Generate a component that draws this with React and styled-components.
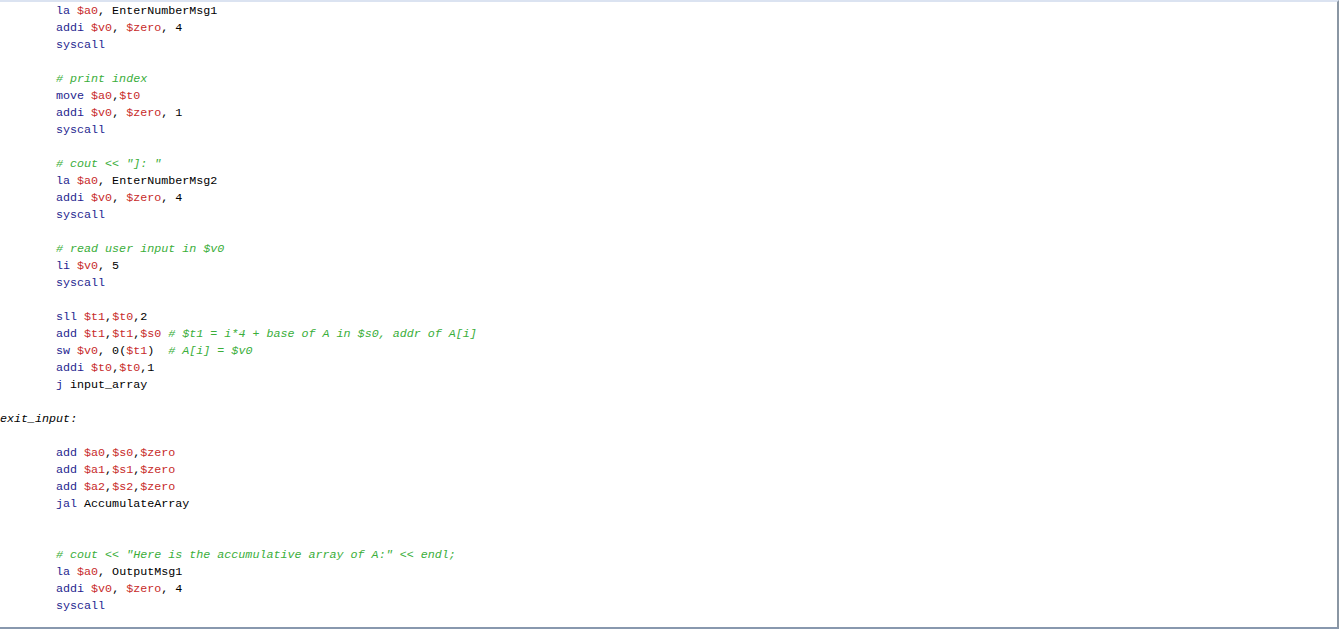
import React from 'react';
import styled, {createGlobalStyle} from "styled-components";

const Global = createGlobalStyle`
    html, body {
        margin: 0;
        padding: 0;
        background: #ffffff;
    }
`;

const Editor = styled.div`
    box-sizing: border-box;
    width: 1339px;
    height: 629px;
    overflow: hidden;
    padding-top: 1px;
    background: #ffffff;
    border-top: 2px solid #dbe3f1;
    border-right: 2px solid #8a96a3;
    border-bottom: 2px solid #8898ae;
    font-family: "Liberation Mono", "Courier New", monospace;
    font-size: 11.7px;
    color: #000000;
`;

const Line = styled.div`
    height: 17px;
    line-height: 17px;
    white-space: pre;
    padding-left: ${props => props.$indent ? '56px' : '0'};
`;

const Op = styled.span`
    color: #1f1f8f;
`;

const Reg = styled.span`
    color: #c72a2a;
`;

const Comment = styled.span`
    color: #3aae3a;
    font-style: italic;
`;

const Label = styled.span`
    font-style: italic;
`;

const code = [
    'la $a0, EnterNumberMsg1',
    'addi $v0, $zero, 4',
    'syscall',
    '',
    '# print index',
    'move $a0,$t0',
    'addi $v0, $zero, 1',
    'syscall',
    '',
    '# cout << "]: "',
    'la $a0, EnterNumberMsg2',
    'addi $v0, $zero, 4',
    'syscall',
    '',
    '# read user input in $v0',
    'li $v0, 5',
    'syscall',
    '',
    'sll $t1,$t0,2',
    'add $t1,$t1,$s0 # $t1 = i*4 + base of A in $s0, addr of A[i]',
    'sw $v0, 0($t1)  # A[i] = $v0',
    'addi $t0,$t0,1',
    'j input_array',
    '',
    'exit_input:',
    '',
    'add $a0,$s0,$zero',
    'add $a1,$s1,$zero',
    'add $a2,$s2,$zero',
    'jal AccumulateArray',
    '',
    '',
    '# cout << "Here is the accumulative array of A:" << endl;',
    'la $a0, OutputMsg1',
    'addi $v0, $zero, 4',
    'syscall',
];

// split a line into coloured pieces
const renderCode = (text) => {
    const hash = text.indexOf('#');
    const body = hash >= 0 ? text.slice(0, hash) : text;
    const comment = hash >= 0 ? text.slice(hash) : null;
    const parts = [];
    const m = body.match(/^(\w+)(.*)$/s);
    if (m) {
        parts.push(<Op key="op">{m[1]}</Op>);
        m[2].split(/(\$\w+)/).forEach((chunk, i) => {
            if (!chunk) return;
            parts.push(chunk.startsWith('$')
                ? <Reg key={'r' + i}>{chunk}</Reg>
                : <span key={'t' + i}>{chunk}</span>);
        });
    }
    if (comment) parts.push(<Comment key="c">{comment}</Comment>);
    return parts;
};

const App = () => {
    return (
        <Editor>
            <Global/>
            {code.map((text, i) => {
                if (text.endsWith(':')) {
                    return <Line key={i}><Label>{text}</Label></Line>;
                }
                return <Line key={i} $indent>{text ? renderCode(text) : ' '}</Line>;
            })}
        </Editor>
    )
}
export default App;
